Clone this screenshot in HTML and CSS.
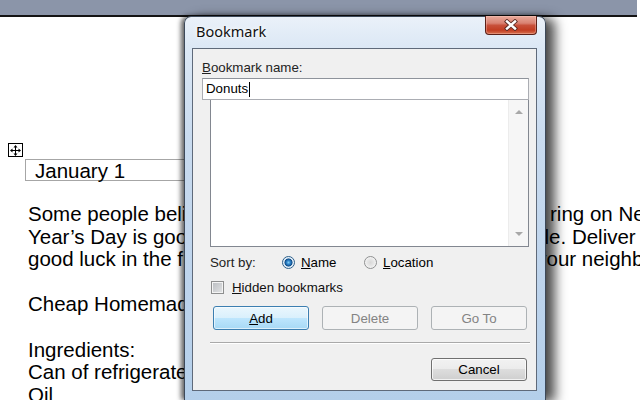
FILE: index.html
```html
<!DOCTYPE html>
<html lang="en">
<head>
    <meta charset="UTF-8">
    <meta name="viewport" content="width=device-width, initial-scale=1.0">
    <title>Bookmark</title>
    <link rel="stylesheet" href="styles.css">
</head>
<body>
    <div class="window-bar"></div>

    <div class="page">
        <div class="move-handle">
            <svg width="11" height="11" viewBox="0 0 11 11">
                <path d="M5.5 1.5v8M1.5 5.5h8" stroke="#000" stroke-width="1" fill="none"/>
                <path d="M5.5 0 3.5 2.5h4zM5.5 11 3.5 8.5h4zM0 5.5 2.5 3.5v4zM11 5.5 8.5 3.5v4z" fill="#000"/>
            </svg>
        </div>
        <div class="date-cell">January 1</div>

        <p class="para first">Some people believe that eating one donut shaped like a ring on New<br>Year’s Day is good luck. This recipe is fast and very simple. Deliver<br>good luck in the future to your kids, friends, and to all of your neighbors.</p>
        <p class="para">Cheap Homemade Donuts</p>
        <p class="para">Ingredients:<br>Can of refrigerated biscuits<br>Oil</p>
    </div>

    <div class="dialog">
        <div class="caption">
            <span class="caption-title">Bookmark</span>
            <button class="close-btn" aria-label="Close">
                <svg width="16" height="12" viewBox="0 0 16 12">
                    <path d="M4 2.5 12 9.5M12 2.5 4 9.5" stroke="#5a2a22" stroke-width="4.2" stroke-linecap="square"/>
                    <path d="M4 2.5 12 9.5M12 2.5 4 9.5" stroke="#fff" stroke-width="2.4" stroke-linecap="square"/>
                </svg>
            </button>
        </div>

        <div class="client">
            <label class="field-label"><u>B</u>ookmark name:</label>
            <div class="name-input">Donuts<span class="caret"></span></div>
            <div class="name-list">
                <div class="list-scroll">
                    <span class="arrow arrow-up"></span>
                    <span class="arrow arrow-down"></span>
                </div>
            </div>

            <div class="sort-row">
                <span class="sort-label">Sort by:</span>
                <span class="option option-name"><span class="radio checked"></span><span><u>N</u>ame</span></span>
                <span class="option"><span class="radio"></span><span><u>L</u>ocation</span></span>
            </div>

            <div class="check-row"><span class="checkbox"></span><span><u>H</u>idden bookmarks</span></div>

            <div class="btn-row">
                <button class="btn btn-default"><u>A</u>dd</button>
                <button class="btn" disabled>Delete</button>
                <button class="btn" disabled>Go To</button>
            </div>

            <div class="separator"></div>

            <div class="btn-row btn-row-end">
                <button class="btn btn-cancel">Cancel</button>
            </div>
        </div>
    </div>
</body>
</html>
```

FILE: styles.css
```css
body {
    margin: 0;
    width: 640px;
    height: 400px;
    overflow: hidden;
    background: #fff;
    font-family: "Liberation Sans", Arial, sans-serif;
}
.window-bar {
    width: 637px;
    height: 15px;
    background: #8b95a9;
    border-bottom: 2px solid #141414;
}
.page {
    padding-top: 126px;
    font-size: 20.5px;
    color: #000;
}
.move-handle {
    width: 15px;
    height: 14px;
    margin-left: 8px;
    box-sizing: border-box;
    border: 1px solid #000;
    display: flex;
    align-items: center;
    justify-content: center;
}
.date-cell {
    width: 480px;
    height: 22px;
    margin: 2px 0 0 25px;
    padding-left: 9px;
    box-sizing: border-box;
    border: 1px solid #a6a6a6;
    border-right: none;
    line-height: 21px;
}
.para {
    margin: 0 0 22.6px 28px;
    line-height: 22.6px;
    white-space: nowrap;
}
.para.first {
    margin-top: 22px;
}

/* dialog window */
.dialog {
    position: absolute;
    left: 184px;
    top: 16px;
    width: 362px;
    height: 384px;
    box-sizing: border-box;
    padding: 0 8px 0 7px;
    border: 1px solid #3d4959;
    border-bottom: none;
    border-radius: 7px 7px 0 0;
    background: linear-gradient(180deg, #eaf1f9 0, #dce8f5 30px, #c9dbef 120px, #bed4ec 260px, #b4cfea 100%);
    box-shadow: 9px 2px 12px rgba(0, 0, 0, 0.7), -3px 0 5px rgba(0, 0, 0, 0.6);
    display: flex;
    flex-direction: column;
    font-family: "Liberation Sans", Arial, sans-serif;
    font-size: 13.3px;
    color: #000;
}
.caption {
    height: 31px;
    display: flex;
    justify-content: space-between;
    align-items: flex-start;
}
.caption-title {
    padding: 4px 0 0 4px;
    font-family: "Noto Sans", "Open Sans", sans-serif;
    font-size: 14.5px;
    line-height: 20px;
    color: #111;
    text-shadow: 0 0 6px #fff, 0 0 3px #fff;
}
.close-btn {
    width: 52px;
    height: 19px;
    margin-top: -1px;
    padding: 0;
    border: 1px solid #5b2018;
    border-top: none;
    border-radius: 0 0 4px 4px;
    background: linear-gradient(180deg, #e9ab9c 0, #d98171 40%, #c8503a 52%, #c23d22 78%, #d8714f 100%);
    box-shadow: inset 0 0 0 1px rgba(255, 210, 200, 0.35);
    display: flex;
    align-items: center;
    justify-content: center;
}
.client {
    flex: 1;
    margin-bottom: 9px;
    border: 1px solid #5f6a7a;
    background: #f0f0f0;
    display: flex;
    flex-direction: column;
}
.field-label {
    margin: 11px 0 0 9px;
    line-height: 16px;
    color: #222;
}
.name-input {
    height: 22px;
    margin: 2px 7px 0 9px;
    padding: 0 3px;
    box-sizing: border-box;
    border: 1px solid #abadb3;
    border-top-color: #8e939b;
    background: #fff;
    line-height: 20px;
    display: flex;
    align-items: center;
}
.caret {
    width: 1px;
    height: 15px;
    margin-left: 1px;
    background: #000;
}
.name-list {
    height: 147px;
    margin: 0 7px 0 17px;
    box-sizing: border-box;
    border: 1px solid #828790;
    border-top: none;
    background: #fff;
    display: flex;
    justify-content: flex-end;
}
.list-scroll {
    width: 19px;
    padding: 10px 0;
    background: #f6f6f6;
    border-left: 1px solid #ececec;
    display: flex;
    flex-direction: column;
    justify-content: space-between;
    align-items: center;
}
.arrow {
    width: 0;
    height: 0;
    border-left: 4px solid transparent;
    border-right: 4px solid transparent;
}
.arrow-up {
    border-bottom: 4px solid #a8a8a8;
}
.arrow-down {
    border-top: 4px solid #a8a8a8;
}
.sort-row {
    height: 16px;
    margin: 7px 0 0 17px;
    display: flex;
    align-items: center;
}
.sort-label {
    width: 72px;
    color: #222;
}
.option {
    display: flex;
    align-items: center;
    gap: 6px;
}
.option-name {
    width: 82px;
}
.radio {
    width: 13px;
    height: 13px;
    box-sizing: border-box;
    border: 1px solid #8f9091;
    border-radius: 50%;
    background: radial-gradient(circle 6px at 50% 50%, #d8d8d8 0, #e6e6e6 55%, #f7f7f7 100%);
}
.radio.checked {
    border-color: #2c5f8a;
    background: radial-gradient(circle 6px at 50% 50%, #7ccbf3 0, #2a7dc4 35%, #0e4b86 62%, #d9e7f4 72%, #f4f8fc 100%);
}
.check-row {
    height: 15px;
    margin: 10px 0 0 18px;
    display: flex;
    align-items: center;
    gap: 8px;
    color: #111;
}
.checkbox {
    width: 13px;
    height: 13px;
    box-sizing: border-box;
    border: 1px solid #8e8f8f;
    background: linear-gradient(135deg, #b9bcc0 0, #e4e5e6 100%);
    box-shadow: inset 0 0 0 1px #f4f4f4;
}
.btn-row {
    margin: 11px 9px 0 20px;
    display: flex;
    gap: 13px;
}
.btn-row-end {
    margin-top: 14px;
    justify-content: flex-end;
}
.btn {
    width: 96px;
    height: 24px;
    padding: 0;
    box-sizing: border-box;
    border: 1px solid #adb2b5;
    border-radius: 3px;
    background: #f4f4f4;
    font-family: "Liberation Sans", Arial, sans-serif;
    font-size: 13.3px;
    color: #838383;
}
.btn-default {
    border-color: #3c7fb1;
    background: linear-gradient(180deg, #eaf6fd 0, #d9f0fc 50%, #bee6fd 50%, #a7d9f5 100%);
    box-shadow: inset 0 0 0 1px rgba(255, 255, 255, 0.6);
    color: #000;
}
.btn-cancel {
    height: 23px;
    border-color: #707070;
    background: linear-gradient(180deg, #f2f2f2 0, #ebebeb 50%, #dddddd 50%, #cfcfcf 100%);
    box-shadow: inset 0 0 0 1px rgba(255, 255, 255, 0.7);
    color: #000;
}
.separator {
    margin: 12px 6px 0 17px;
    border-top: 1px solid #a9a9a9;
    border-bottom: 1px solid #fff;
}
```
